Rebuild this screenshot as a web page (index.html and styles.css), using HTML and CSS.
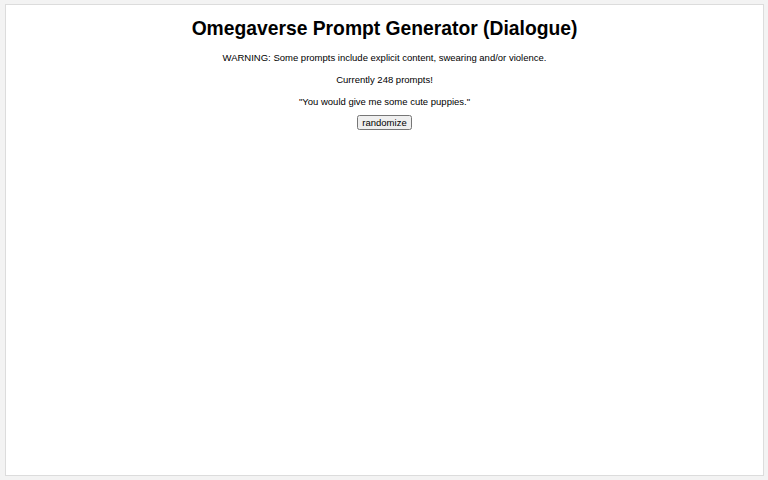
FILE: index.html
```html
<!DOCTYPE html>
<html lang="en">
<head>
  <meta charset="UTF-8" />
  <meta name="viewport" content="width=device-width, initial-scale=1.0"/>
  <title>Omegaverse Prompt Generator (Dialogue)</title>
  <link rel="stylesheet" href="styles.css">
</head>
<body>
  <div class="page">
    <h1>Omegaverse Prompt Generator (Dialogue)</h1>
    <p>WARNING: Some prompts include explicit content, swearing and/or violence.</p>
    <p>Currently 248 prompts!</p>
    <p class="prompt" id="prompt">"You would give me some cute puppies."</p>
    <button class="randomize" id="randomize">randomize</button>
  </div>
</body>
</html>
```

FILE: styles.css
```css
body {
  margin: 0;
  padding: 4px 4px 4px 5px;
  background-color: #f3f3f3;
  font-family: "Liberation Sans", Arial, sans-serif;
  color: #000;
  height: 100vh;
  box-sizing: border-box;
}

.page {
  height: 100%;
  box-sizing: border-box;
  background-color: #fff;
  border: 1px solid #dcdcdc;
  text-align: center;
  padding-top: 13px;
}

h1 {
  font-size: 19.3px;
  line-height: 22px;
  margin: 0 0 12px;
}

p {
  font-size: 9.5px;
  margin: 0 0 10px;
  line-height: 12px;
}

.prompt {
  margin-bottom: 7px;
}

.randomize {
  display: block;
  margin: 0 auto;
  font-family: "Liberation Sans", Arial, sans-serif;
  font-size: 9.5px;
  line-height: 11px;
  padding: 0 3px;
}
```
